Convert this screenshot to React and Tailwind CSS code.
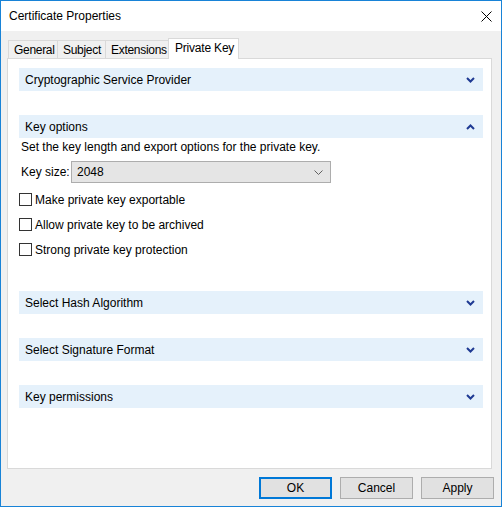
import React from "react"

const Chevron = ({ up }) => (
  <svg width="9" height="6" viewBox="0 0 9 6" className="shrink-0">
    <path
      d={up ? "M1 5 L4.5 1.5 L8 5" : "M1 1 L4.5 4.5 L8 1"}
      fill="none"
      stroke="#1f3a93"
      strokeWidth="2"
    />
  </svg>
)

const SectionHeader = ({ title, up }) => (
  <div className="flex h-[23px] items-center justify-between bg-[#e5f1fb] pl-[6px] pr-[8px]">
    <span>{title}</span>
    <Chevron up={up} />
  </div>
)

const CheckRow = ({ label }) => (
  <div className="flex h-[25px] items-center gap-[3px]">
    <div className="h-[13px] w-[13px] border border-[#333333] bg-white" />
    <span>{label}</span>
  </div>
)

const tabs = [
  { name: "General", w: "w-[49px]" },
  { name: "Subject", w: "w-[48px]" },
  { name: "Extensions", w: "w-[63px]" },
]

export default function App() {
  return (
    <div
      className="flex h-[507px] w-[502px] flex-col border border-[#1883d7] bg-[#f0f0f0] text-[12px] text-black"
      style={{ fontFamily: '"Liberation Sans", Arial, sans-serif' }}
    >
      {/* title bar */}
      <div className="flex h-[30px] shrink-0 items-center justify-between bg-white pl-[8px] pr-[9px]">
        <span>Certificate Properties</span>
        <svg width="11" height="11" viewBox="0 0 11 11">
          <path d="M0.5 0.5 L10.5 10.5 M10.5 0.5 L0.5 10.5" stroke="#000" strokeWidth="1" />
        </svg>
      </div>

      <div className="flex flex-1 flex-col pl-[6px] pr-[9px] pt-[7px]">
        {/* tabs */}
        <div className="ml-[1px] flex h-[20px] items-end">
          {tabs.map((t) => (
            <div
              key={t.name}
              className={`${t.w} flex h-[18px] items-center overflow-hidden whitespace-nowrap border-l border-t border-[#d9d9d9] pl-[5px] pt-[1px] tracking-[-0.3px]`}
            >
              {t.name}
            </div>
          ))}
          <div className="relative z-10 -mb-px flex h-[21px] w-[71px] items-center whitespace-nowrap border-x border-t border-[#d9d9d9] bg-white pb-[2px] pl-[6px] tracking-[-0.2px]">
            Private Key
          </div>
        </div>

        {/* panel */}
        <div className="flex flex-1 flex-col border border-[#d9d9d9] bg-white pl-[11px] pr-[8px] pt-[9px]">
          <SectionHeader title="Cryptographic Service Provider" />
          <div className="h-[24px]" />
          <SectionHeader title="Key options" up />
          <div className="pl-[2px]">
            <div className="flex h-[17px] items-center">
              Set the key length and export options for the private key.
            </div>
            <div className="mt-[6px] flex items-center">
              <span className="w-[50px]">Key size:</span>
              <div className="flex h-[22px] w-[260px] items-center justify-between border border-[#adadad] bg-[#e5e5e5] pl-[5px] pr-[7px]">
                <span>2048</span>
                <svg width="9" height="5" viewBox="0 0 9 5">
                  <path d="M0.5 0.5 L4.5 4.5 L8.5 0.5" fill="none" stroke="#606060" strokeWidth="1" />
                </svg>
              </div>
            </div>
          </div>
          <div className="mt-[4px] flex flex-col">
            <CheckRow label="Make private key exportable" />
            <CheckRow label="Allow private key to be archived" />
            <CheckRow label="Strong private key protection" />
          </div>
          <div className="h-[29px]" />
          <SectionHeader title="Select Hash Algorithm" />
          <div className="h-[24px]" />
          <SectionHeader title="Select Signature Format" />
          <div className="h-[24px]" />
          <SectionHeader title="Key permissions" />
        </div>

        {/* buttons */}
        <div className="flex h-[37px] shrink-0 justify-end gap-[8px] pt-[8px]">
          <button className="h-[22px] w-[73px] border-2 border-[#0078d7] bg-[#e1e1e1]">OK</button>
          <button className="h-[22px] w-[73px] border border-[#adadad] bg-[#e1e1e1]">Cancel</button>
          <button className="-mr-[2px] h-[22px] w-[73px] border border-[#adadad] bg-[#e1e1e1]">Apply</button>
        </div>
      </div>
    </div>
  )
}
